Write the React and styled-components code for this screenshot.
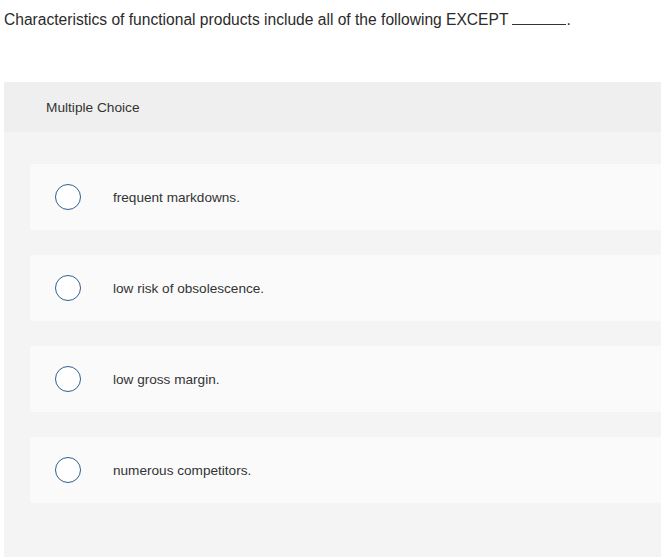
import styled, { createGlobalStyle } from "styled-components";

const GlobalStyle = createGlobalStyle`
  body {
    margin: 0;
    background: #fff;
    font-family: "Liberation Sans", Arial, sans-serif;
    color: #333;
    overflow: hidden;
  }
`;

const Page = styled.div`
  padding-left: 4px;
  width: 100vw;
  box-sizing: border-box;
  overflow: hidden;
`;

const Question = styled.p`
  margin: 0;
  padding-top: 10px;
  font-size: 15.6px;
  line-height: 20px;
  color: #2b2b2b;
`;

const Blank = styled.span`
  display: inline-block;
  width: 54px;
  margin-left: 4px;
  border-bottom: 1px solid #333;
  vertical-align: baseline;
  height: 12px;
`;

const Panel = styled.section`
  margin-top: 52px;
  background: #f4f4f4;
  min-height: 480px;
`;

const PanelHeader = styled.div`
  background: #efefef;
  height: 50px;
  display: flex;
  align-items: center;
  padding-left: 42px;
  font-size: 13.7px;
  color: #333;
`;

const Options = styled.div`
  display: flex;
  flex-direction: column;
  gap: 25px;
  padding: 32px 0 0 26px;
`;

const Option = styled.label`
  display: flex;
  align-items: center;
  height: 66px;
  background: #fafafa;
  border-radius: 3px 0 0 3px;
  padding-left: 25px;
  cursor: pointer;
`;

const Radio = styled.span`
  width: 24px;
  height: 24px;
  border: 1.5px solid #2e5f8e;
  border-radius: 50%;
  background: #fff;
  flex-shrink: 0;
`;

const Label = styled.span`
  margin-left: 32px;
  font-size: 13.6px;
  color: #333;
`;

const choices = [
  "frequent markdowns.",
  "low risk of obsolescence.",
  "low gross margin.",
  "numerous competitors.",
];

export default function App() {
  return (
    <Page>
      <GlobalStyle />
      <Question>
        Characteristics of functional products include all of the following EXCEPT
        <Blank />.
      </Question>
      <Panel>
        <PanelHeader>Multiple Choice</PanelHeader>
        <Options>
          {choices.map((c) => (
            <Option key={c}>
              <Radio />
              <Label>{c}</Label>
            </Option>
          ))}
        </Options>
      </Panel>
    </Page>
  );
}
